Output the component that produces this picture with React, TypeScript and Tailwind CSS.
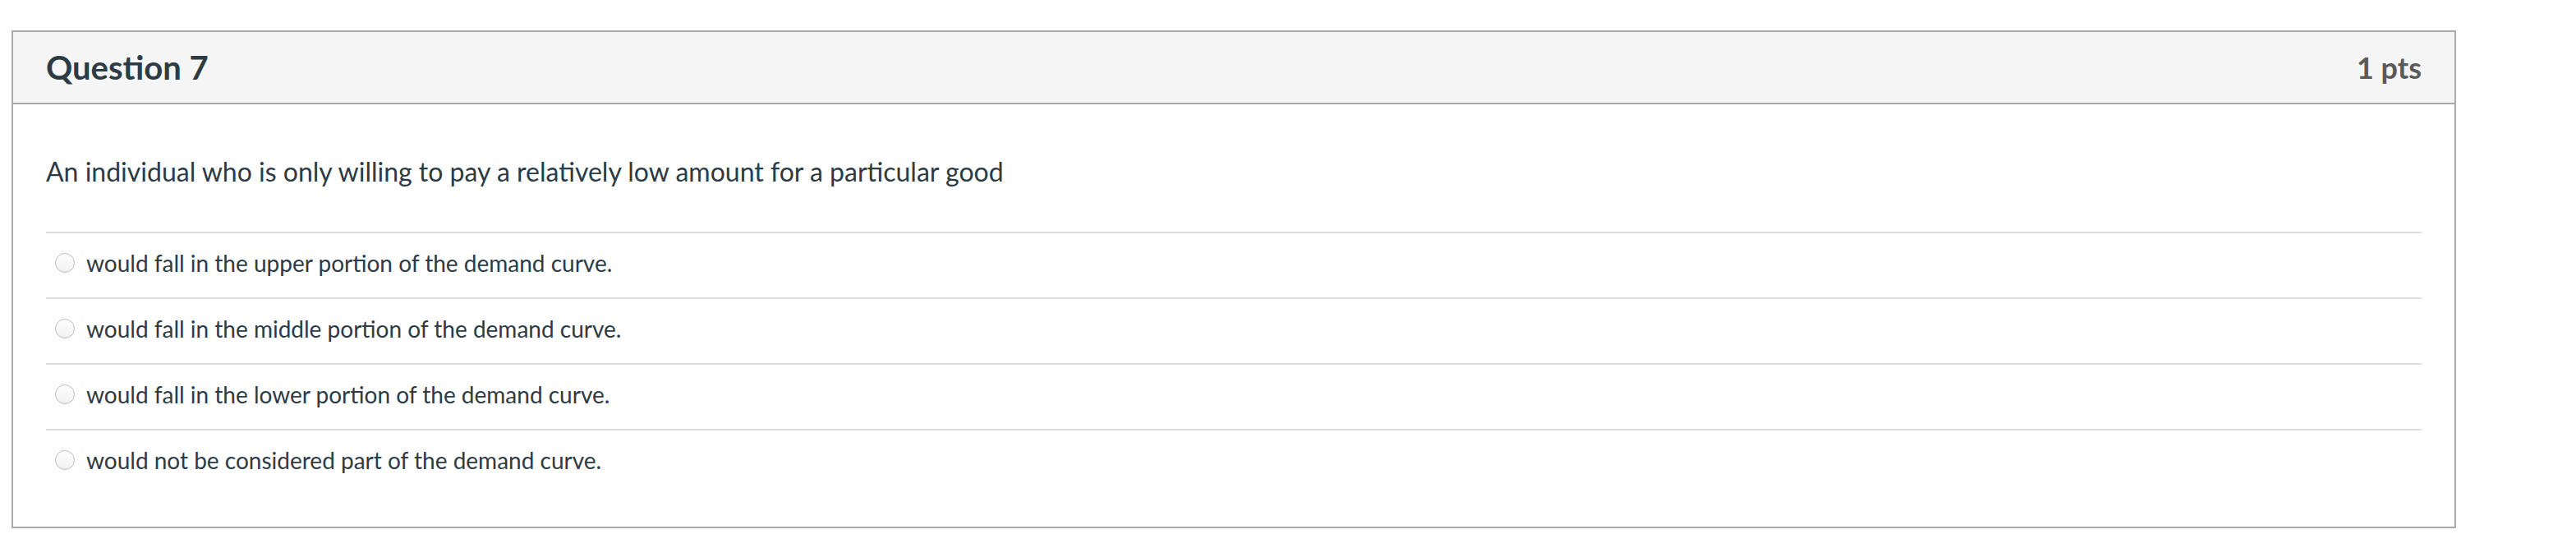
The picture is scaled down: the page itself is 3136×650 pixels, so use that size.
import React from "react";

const answers = [
  "would fall in the upper portion of the demand curve.",
  "would fall in the middle portion of the demand curve.",
  "would fall in the lower portion of the demand curve.",
  "would not be considered part of the demand curve.",
];

const App: React.FC = () => {
  return (
    <div
      className="min-h-[650px] w-[3136px] bg-white pl-[14px] pt-[37px] text-[#2d3b45]"
      style={{ fontFamily: "Lato, 'Open Sans', sans-serif" }}
    >
      <div className="w-[2976px] border-2 border-[#aaaaaa]">
        {/* Header */}
        <div className="flex h-[88px] items-center justify-between border-b-2 border-[#aaaaaa] bg-[#f5f5f5] px-[40px]">
          <h2 className="text-[40px] font-bold text-[#2d3b45]">Question 7</h2>
          <div className="text-[36px] font-bold text-[#5a5a5a]">1 pts</div>
        </div>

        {/* Body */}
        <div className="px-[40px] pb-[39px]">
          <p className="pb-[54px] pt-[63px] text-[32px] leading-[38px]">
            An individual who is only willing to pay a relatively low amount for a particular good
          </p>
          <div>
            {answers.map((a) => (
              <label
                key={a}
                className="flex h-[80px] items-center border-t-2 border-[#dddddd] pb-[6px]"
              >
                <span className="ml-[11px] h-[24px] w-[24px] shrink-0 rounded-full border border-[#bdbdbd] bg-gradient-to-b from-white to-[#f0f0f0]" />
                <span className="ml-[14px] text-[28px]">{a}</span>
              </label>
            ))}
          </div>
        </div>
      </div>
    </div>
  );
};

export default App;
